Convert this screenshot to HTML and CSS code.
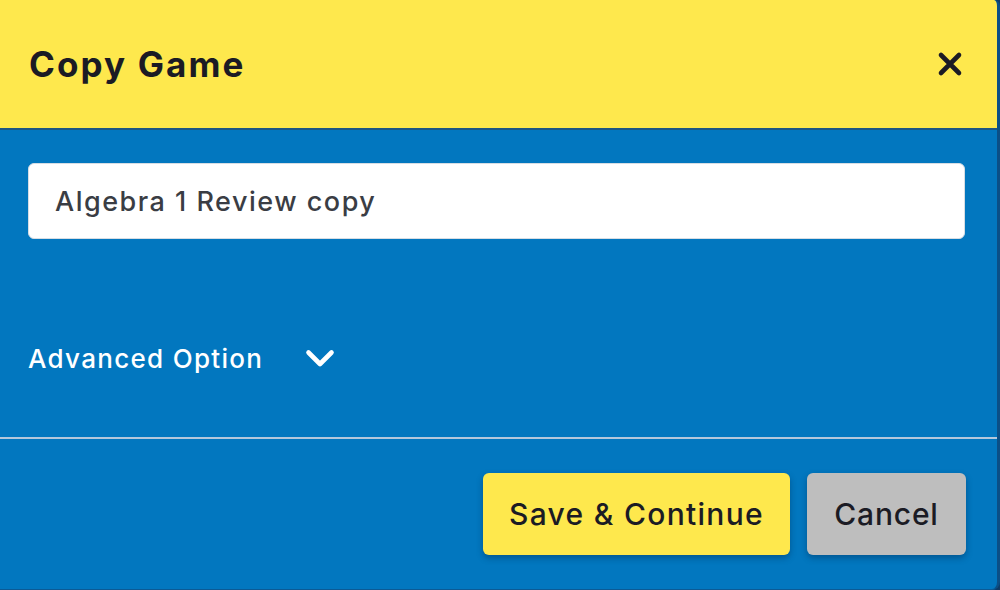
FILE: index.html
```html
<!DOCTYPE html>
<html lang="en">
<head>
<meta charset="utf-8">
<title>Copy Game</title>
<link rel="stylesheet" href="styles.css">
</head>
<body>
<div class="dialog">
  <header class="dialog-header">
    <h1 class="dialog-title">Copy Game</h1>
    <button class="close-btn" aria-label="Close">
      <svg width="26" height="26" viewBox="0 0 26 26"><path d="M4 4 L22 22 M22 4 L4 22" stroke="#1b1b24" stroke-width="4.6" stroke-linecap="round" fill="none"/></svg>
    </button>
  </header>
  <div class="dialog-body">
    <input class="name-input" type="text" value="Algebra 1 Review copy">
    <div class="advanced">
      <span class="advanced-label">Advanced Option</span>
      <svg class="chevron" width="30" height="22" viewBox="0 0 30 22"><path d="M3.5 4.5 L15 16 L26.5 4.5" stroke="#ffffff" stroke-width="4.6" stroke-linecap="round" stroke-linejoin="round" fill="none"/></svg>
    </div>
  </div>
  <footer class="dialog-footer">
    <button class="btn btn-primary">Save &amp; Continue</button>
    <button class="btn btn-secondary">Cancel</button>
  </footer>
</div>
</body>
</html>
```

FILE: styles.css
```css
* { box-sizing: border-box; }
html, body { margin: 0; padding: 0; background: #0f3b66; }
body { font-family: Inter, "Open Sans", sans-serif; }

.dialog {
  width: 1000px;
  height: 590px;
  background: #0277bf;
  border-right: 3px solid #0b4f86;
  border-bottom: 1px solid #0b5a95;
  border-radius: 0 6px 8px 0;
  display: flex;
  flex-direction: column;
  overflow: hidden;
}

.dialog-header {
  height: 130px;
  flex: none;
  background: #fee84d;
  border-bottom: 2px solid #1d5583;
  display: flex;
  align-items: center;
  justify-content: space-between;
  padding: 0 34px 0 29px;
}

.dialog-title {
  margin: 0;
  font-size: 35px;
  font-weight: 650;
  color: #1b1b24;
  letter-spacing: 2.1px;
}

.close-btn {
  background: none;
  border: none;
  padding: 0;
  width: 26px;
  height: 26px;
  display: flex;
  cursor: pointer;
}

.dialog-body {
  padding: 33px 32px 0 28px;
  height: 309px;
  flex: none;
  border-bottom: 2px solid #b4c8dc;
}

.name-input {
  display: block;
  width: 100%;
  height: 76px;
  border: 1px solid #d6dde4;
  border-radius: 6px;
  background: #ffffff;
  padding: 0 26px;
  font-family: Inter, "Open Sans", sans-serif;
  font-size: 27px;
  font-weight: 500;
  color: #3a3d44;
  letter-spacing: 1.5px;
  outline: none;
}

.advanced {
  margin-top: 100px;
  height: 38px;
  display: flex;
  align-items: center;
  gap: 42px;
}

.advanced-label {
  font-size: 26px;
  font-weight: 500;
  color: #ffffff;
  letter-spacing: 1.3px;
}

.chevron { display: block; margin-top: 2px; }

.dialog-footer {
  flex: 1;
  display: flex;
  justify-content: flex-end;
  align-items: flex-start;
  gap: 17px;
  padding: 34px 31px 0 0;
}

.btn {
  height: 82px;
  border: none;
  border-radius: 6px;
  font-family: Inter, "Open Sans", sans-serif;
  font-size: 30px;
  font-weight: 550;
  color: #1b1b24;
  letter-spacing: 1.3px;
  box-shadow: 0 3px 6px rgba(0, 30, 60, 0.35);
  cursor: pointer;
}

.btn-primary {
  width: 307px;
  background: #fee84d;
}

.btn-secondary {
  width: 159px;
  background: #bebebe;
  letter-spacing: 0.8px;
}
```
